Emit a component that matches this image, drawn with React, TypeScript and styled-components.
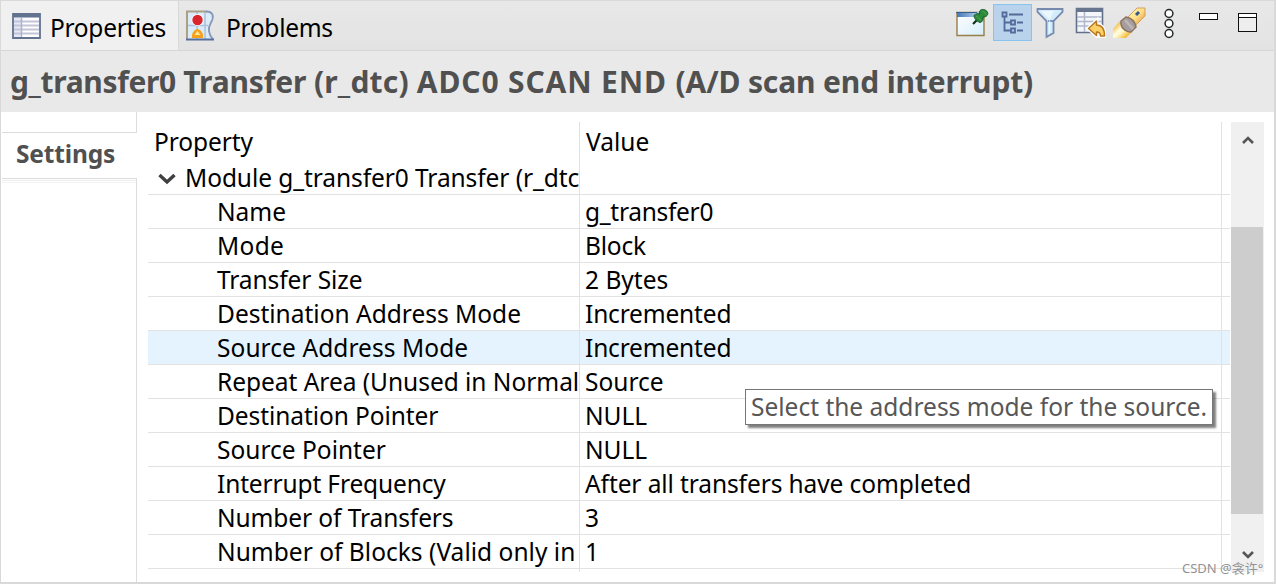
import React from 'react';
import styled, { createGlobalStyle } from 'styled-components';

type Property = { name: string; value: string; nameGap?: number; valueGap?: number; active?: boolean };

const titleParts = [
  { text: 'g_transfer0 ', gap: -0.35 },
  { text: 'Transfer ', gap: -0.15 },
  { text: '(r_dtc) ', gap: 0.2 },
  { text: 'ADC0 SCAN END ', gap: 0.86 },
  { text: '(A/D scan end interrupt)', gap: -0.14 },
];

const properties: Property[] = [
  { name: 'Name', value: 'g_transfer0', valueGap: -0.3 },
  { name: 'Mode', value: 'Block', nameGap: 0.3, valueGap: -0.2 },
  { name: 'Transfer Size', value: '2 Bytes', nameGap: -0.08 },
  { name: 'Destination Address Mode', value: 'Incremented', valueGap: -0.18 },
  { name: 'Source Address Mode', value: 'Incremented', nameGap: 0.06, valueGap: -0.18, active: true },
  { name: 'Repeat Area (Unused in Normal', value: 'Source', nameGap: -0.03 },
  { name: 'Destination Pointer', value: 'NULL', nameGap: -0.08 },
  { name: 'Source Pointer', value: 'NULL' },
  { name: 'Interrupt Frequency', value: 'After all transfers have completed', nameGap: -0.14, valueGap: -0.1 },
  { name: 'Number of Transfers', value: '3', nameGap: -0.1 },
  { name: 'Number of Blocks (Valid only in', value: '1', nameGap: 0.02 },
];

const TableIcon = () => (
  <svg width="29" height="28" viewBox="0 0 29 28">
    <rect x="1" y="1" width="27" height="25" fill="#fff" />
    <path d="M1 1h27v4H1z" fill="#62738f" />
    <path d="M2 5h25v1H2z" fill="#a9b6ca" />
    <path d="M2 6h7v19H2z" fill="#e3e9f6" />
    <path d="M2 9.5h25M2 13.5h25M2 17.5h25M2 21.5h25" stroke="#c3c4d8" strokeWidth="1.8" />
    <path d="M9.5 5v20" stroke="#a9b4ca" strokeWidth="1.5" />
    <path d="M1 1v25h27V1" fill="none" stroke="#62738f" strokeWidth="1.8" />
  </svg>
);

const ProblemsIcon = () => (
  <svg width="31" height="31" viewBox="0 0 31 31">
    <path d="M2 1.5h20c7 0 7 6 4 11-3 5-3 11 2 17H2z" fill="#dcebf8" />
    <path d="M12 2v27M2 15.5h21M20 2v27" stroke="#acc1df" strokeWidth="1.5" />
    <path d="M2 29V1.5h20" fill="none" stroke="#aaa184" strokeWidth="2" />
    <path d="M21 1.5c8 0 8 6 5 11-3 5-3 11 2 17" fill="none" stroke="#8498b9" strokeWidth="1.8" />
    <path d="M1 29.5h28" stroke="#586f9e" strokeWidth="2" />
    <circle cx="12.5" cy="10" r="6" fill="#fff" />
    <circle cx="12.5" cy="10" r="5.2" fill="#d9252e" />
    <path d="M7 28v-3c0-2 3-6 5.5-6s5.5 4 5.5 6v3z" fill="#f4a11c" />
    <path d="M9.500 25h6l-3-4z" fill="#ffe699" />
  </svg>
);

const PinIcon = () => (
  <svg width="33" height="30" viewBox="0 0 33 30">
    <defs>
      <linearGradient id="pinHead" x2="1"><stop stopColor="#4179b8" /><stop offset="1" stopColor="#d4e4f4" /></linearGradient>
      <linearGradient id="pinBody" x2="1" y2="1"><stop stopColor="#fff" /><stop offset="1" stopColor="#d5edfa" /></linearGradient>
    </defs>
    <path d="M1 4.500h27v23H1z" fill="url(#pinBody)" stroke="#967f48" strokeWidth="1.400" />
    <path d="M1 4h27v5H1z" fill="url(#pinHead)" />
    <path d="M0 4.500h21" stroke="#326093" />
    <path d="m17 16 6-6" stroke="#102d1b" strokeWidth="2.200" />
    <path d="M18 7.500c2-2 4-2 5.500-1.500-.5-3 1-5 4-4.500 3.500.5 5.500 4 3.500 6-1 1-2 1.500-4 1.500.5 3-.5 5-3 5.500-3-1-6-4-6-7z" fill="#2b8a3a" stroke="#155d28" />
    <path d="M20 8c2 .5 4 2.500 4.500 4.500M26.500 3.500c2 0 3 1.500 3.500 3" fill="none" stroke="#57a65f" />
  </svg>
);

const TreeIcon = () => (
  <svg width="24" height="24" viewBox="0 0 24 24" fill="none" stroke="#536b9a" strokeWidth="1.8">
    <path d="M3.500 6v13.500H10M3.500 11.500H10M8 3.500h14M16 11.500h6M16 19.500h6" />
    <path d="M1.500 1.500h4v4h-4zM10 9.500h4v4h-4zM10 17.500h4v4h-4z" fill="#b4d1f1" />
  </svg>
);

const FilterIcon = () => (
  <svg width="28" height="32" viewBox="0 0 28 32">
    <path d="M1.500 2h25v3l-9 9v12l-7 4V14l-9-9z" fill="#d3ecfa" stroke="#7789ad" strokeWidth="1.800" />
    <path d="M12 14h6" stroke="#6580ab" strokeWidth="1.500" />
    <path d="m5 4 8 8v14l1-1V12l4-8z" fill="#fff" opacity=".55" />
  </svg>
);

const RestoreIcon = () => (
  <svg width="31" height="31" viewBox="0 0 31 31">
    <path d="M1.500 1.500h26v24h-26z" fill="#f5f6fa" stroke="#62708a" strokeWidth="1.600" />
    <path d="M1 1h27v4H1z" fill="#67758e" />
    <path d="M2 10h25M2 14.500h25M2 19h25M9.500 5v20" stroke="#aeb8ca" strokeWidth="1.500" />
    <path d="m13.500 21.500 8-7.500v4c6 0 8 4 8 11h-4c0-3-1-4-4-4v3.500z" fill="#fbd166" stroke="#fff" strokeWidth="4" />
    <path d="m13.500 21.500 8-7.500v4c6 0 8 4 8 11h-4c0-3-1-4-4-4v3.500z" fill="#fbd166" stroke="#b87820" strokeWidth="1.500" strokeLinejoin="round" />
  </svg>
);

const TorchIcon = () => (
  <svg width="34" height="32" viewBox="0 0 34 32">
    <defs>
      <linearGradient id="torchBody" x1=".2" y1=".2" x2=".8" y2=".8"><stop stopColor="#ffefa8" /><stop offset=".5" stopColor="#ffdd84" /><stop offset="1" stopColor="#e9a24a" /></linearGradient>
      <linearGradient id="torchBeam" x1=".2" y1=".2" x2=".8" y2=".8"><stop stopColor="#f5c04c" /><stop offset=".4" stopColor="#fffce4" /><stop offset=".6" stopColor="#fff6c5" /><stop offset="1" stopColor="#f5bd3d" /></linearGradient>
    </defs>
    <path d="m8 14 12 11-6 6H1v-9z" fill="url(#torchBeam)" />
    <path d="M16 10 25 1h8v8L22 20z" fill="url(#torchBody)" stroke="#d6a05e" />
    <path d="m9 14 5-4c6 1 9 5 10 10l-5 5c-6 0-11-5-10-11z" fill="#a69d9f" stroke="#8c725e" strokeWidth="1.500" />
    <path d="m13 13 8 9" stroke="#beb7b8" strokeWidth="2.500" />
    <path d="m24 8 3-3" stroke="#315b8f" strokeWidth="3" />
  </svg>
);

const DotsIcon = () => (
  <svg width="12" height="32" viewBox="0 0 12 32" fill="#fff" stroke="#24292b" strokeWidth="1.500">
    <circle cx="6" cy="6.500" r="3.900" /><circle cx="6" cy="16.500" r="3.900" /><circle cx="6" cy="26.500" r="3.900" />
  </svg>
);

const Chevron = ({ up = false }: { up?: boolean }) => (
  <svg width="12" height="10" viewBox="0 0 12 10"><path d={up ? 'm1 8 5-5 5 5' : 'm1 2 5 5 5-5'} fill="none" stroke="#555" strokeWidth="2.600" /></svg>
);

const App = () => (
  <>
    <GlobalStyle />
    <View>
      <TabBar>
        <Tab active width={178}><TableIcon /><TabText>Properties</TabText></Tab>
        <Tab width={170}><ProblemsIcon /><TabText>Problems</TabText></Tab>
        <Toolbar>
          <Tool width={41}><PinIcon /></Tool>
          <Tool width={39} active><TreeIcon /></Tool>
          <Tool width={36}><FilterIcon /></Tool>
          <Tool width={44}><RestoreIcon /></Tool>
          <Tool width={34}><TorchIcon /></Tool>
          <Tool width={46}><DotsIcon /></Tool>
          <Tool width={33}><Minimize /></Tool>
          <Tool width={44}><Maximize /></Tool>
        </Toolbar>
      </TabBar>
      <Title>{titleParts.map((part) => <Fit key={part.text} gap={part.gap}>{part.text}</Fit>)}</Title>
      <Content>
        <Sidebar><SideTop /><SideTab>Settings</SideTab><SideBottom /></Sidebar>
        <Table>
          <Header><NameCell indent={6}><Fit gap={-0.1}>Property</Fit></NameCell><ValueCell header>Value</ValueCell><EndCell /></Header>
          <Row>
            <NameCell indent={10}>
              <Expand width="18" height="12" viewBox="0 0 18 12"><path d="m1.500 2 7.500 7 7.500-7" /></Expand>
              <Fit gap={-0.08}>Module g_transfer0 Transfer (r_dtc</Fit>
            </NameCell>
            <ValueCell /><EndCell />
          </Row>
          {properties.map((item) => (
            <Row key={item.name} active={item.active}>
              <NameCell indent={69}><Fit gap={item.nameGap ?? 0}>{item.name}</Fit></NameCell>
              <ValueCell><Fit gap={item.valueGap ?? 0}>{item.value}</Fit></ValueCell>
              <EndCell />
            </Row>
          ))}
          <Row last><NameCell indent={0} /><ValueCell /><EndCell /></Row>
        </Table>
        <Scrollbar><ScrollButton><Chevron up /></ScrollButton><Thumb /><ScrollButton bottom><Chevron /></ScrollButton></Scrollbar>
        <Tooltip>Select the address mode for the source.</Tooltip>
        <Watermark>CSDN @衾许°</Watermark>
      </Content>
    </View>
  </>
);

const GlobalStyle = createGlobalStyle`
  * { box-sizing: border-box; }
  body { margin: 0; background: #fff; }
  svg { display: block; flex: none; }
`;

const View = styled.div`
  width: 1276px;
  height: 584px;
  display: flex;
  flex-direction: column;
  overflow: hidden;
  border: solid #d9d9d9;
  border-width: 1px 2px 2px 1px;
  background: #fff;
  color: #000;
  font: 24.5px/34px "Noto Sans", "Noto Sans CJK SC", sans-serif;
  white-space: pre;
`;

const TabBar = styled.div`
  display: flex;
  flex: none;
  height: 50px;
  border-bottom: 1px solid #d6d6d6;
  background: linear-gradient(#e8e8e8, #e3e3e3);
`;

const Tab = styled.div<{ active?: boolean; width: number }>`
  display: flex;
  align-items: center;
  gap: ${({ active }) => (active ? 9 : 10)}px;
  width: ${({ width }) => width}px;
  padding-left: ${({ active }) => (active ? 11 : 6)}px;
  background: ${({ active }) => (active ? '#f0f0f0' : 'transparent')};
  border-right: ${({ active }) => (active ? '1px solid #d8d8d8' : '0')};
`;

const TabText = styled.span`
  padding-top: 5px;
  letter-spacing: -0.3px;
`;

const Toolbar = styled.div`
  display: flex;
  margin-left: auto;
  padding: 3px 5px 7px 0;
`;

const Tool = styled.div<{ width: number; active?: boolean }>`
  display: flex;
  justify-content: center;
  align-items: center;
  width: ${({ width }) => width}px;
  height: 37px;
  border: ${({ active }) => (active ? '1px solid #88c2ee' : '0')};
  background: ${({ active }) => (active ? '#b8d3eb' : 'transparent')};
`;

const Minimize = styled.span`
  width: 19px;
  height: 7px;
  margin-bottom: 12px;
  border: 1px solid #111;
  background: #fff;
`;

const Maximize = styled.span`
  width: 19px;
  height: 19px;
  border: 1px solid #111;
  background: linear-gradient(#fff 3px, #111 3px 4px, #eee 4px);
`;

const Title = styled.div`
  flex: none;
  height: 61px;
  padding: 14px 0 0 9px;
  background: #e9e9e9;
  color: #505050;
  font-size: 30px;
  font-weight: 700;
`;

const Fit = styled.span<{ gap: number }>`
  letter-spacing: ${({ gap }) => gap}px;
`;

const Content = styled.div`
  position: relative;
  display: flex;
  flex: 1;
`;

const Sidebar = styled.div`
  display: flex;
  flex: none;
  flex-direction: column;
  width: 136px;
  padding-left: 1px;
`;

const SideTop = styled.div`
  height: 20px;
  border-right: 1px solid #ddd;
`;

const SideTab = styled.div`
  height: 47px;
  padding: 4px 0 0 14px;
  border: solid #dcdcdc;
  border-width: 1px 0;
  color: #505050;
  font-weight: 700;
  letter-spacing: -0.15px;
`;

const SideBottom = styled.div`
  flex: 1;
  border-right: 1px solid #ddd;
  background: linear-gradient(#fff 1px, #eee 1px 2px, #fff 2px 3px, #f3f3f3 3px 4px, #fff 4px);
`;

const Table = styled.div`
  flex: none;
  width: 1093px;
  height: 460px;
  padding: 10px 0 0 11px;
  overflow: hidden;
`;

const Row = styled.div<{ active?: boolean; last?: boolean }>`
  display: flex;
  height: ${({ last }) => (last ? 3 : 34)}px;
  line-height: 34px;
  border-bottom: ${({ last }) => (last ? '0' : '1px solid #e2e2e2')};
  background: ${({ active }) => (active ? '#e5f3ff' : '#fff')};
`;

const Header = styled.div`
  display: flex;
  height: 39px;
  line-height: 39px;
`;

const NameCell = styled.div<{ indent: number }>`
  display: flex;
  flex: none;
  align-items: center;
  width: 432px;
  padding-left: ${({ indent }) => indent}px;
  border-right: 1px solid #e2e2e2;
`;

const ValueCell = styled.div<{ header?: boolean }>`
  flex: none;
  width: 642px;
  padding-left: ${({ header }) => (header ? 6 : 5)}px;
  border-right: 1px solid #e2e2e2;
`;

const EndCell = styled.div`
  width: 8px;
`;

const Expand = styled.svg`
  margin: 3px 9px 0 0;
  fill: none;
  stroke: #404040;
  stroke-width: 3.4;
`;

const Scrollbar = styled.div`
  display: flex;
  flex: none;
  flex-direction: column;
  width: 33px;
  height: 450px;
  margin: 10px 0 0 1px;
  background: #f0f0f0;
`;

const ScrollButton = styled.div<{ bottom?: boolean }>`
  display: flex;
  justify-content: center;
  height: ${({ bottom }) => (bottom ? 58 : 105)}px;
  padding-top: ${({ bottom }) => (bottom ? 36 : 13)}px;
`;

const Thumb = styled.div`
  width: 32px;
  height: 287px;
  background: #cdcdcd;
`;

const Tooltip = styled.div`
  position: absolute;
  left: 744px;
  top: 277px;
  width: 468px;
  height: 36px;
  padding-left: 5px;
  border: 1px solid #767676;
  background: #fff;
  box-shadow: 3px 3px 2px rgba(0, 0, 0, 0.5);
  color: #575757;
`;

const Watermark = styled.div`
  position: absolute;
  left: 1181px;
  top: 447px;
  color: #929292;
  font-size: 13px;
  line-height: 18px;
`;

export default App;
